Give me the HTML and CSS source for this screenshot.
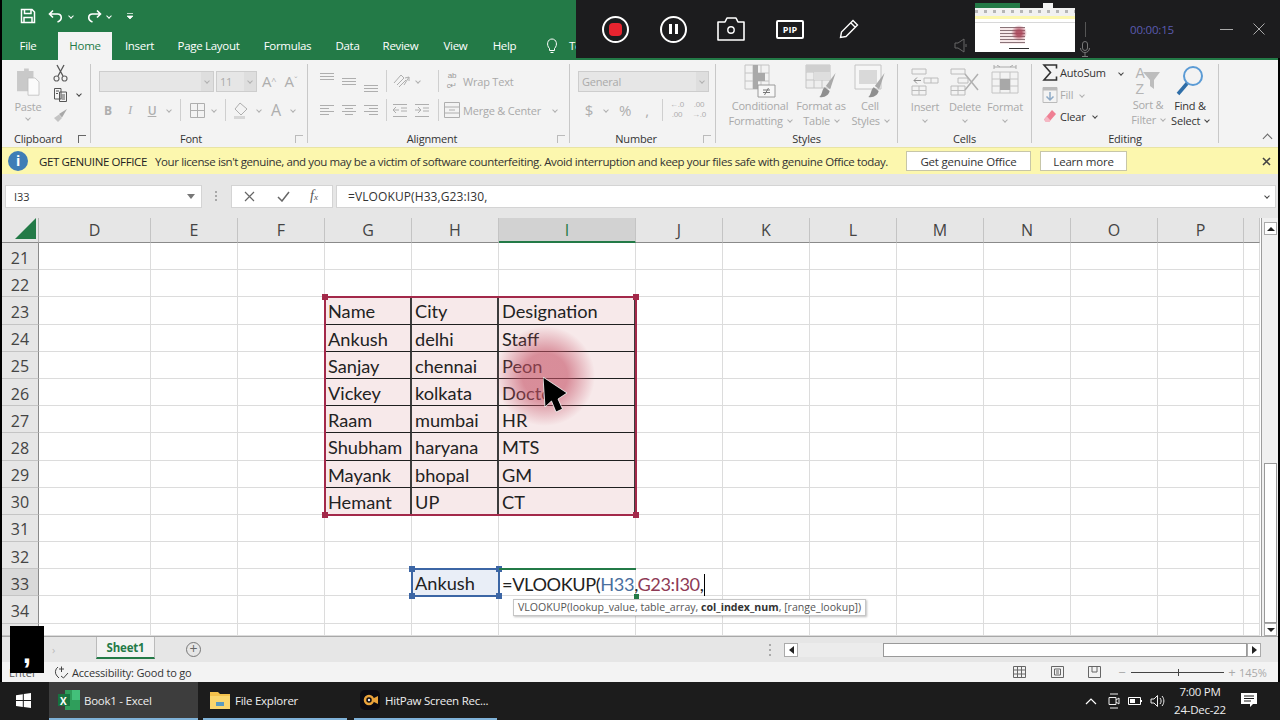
FILE: index.html
```html
<!DOCTYPE html>
<html lang="en">
<head>
    <meta charset="UTF-8">
    <title>Book1 - Excel</title>
    <link rel="stylesheet" href="styles.css">
</head>
<body>
    <svg class="sprites" width="0" height="0">
        <symbol id="al-left" viewBox="0 0 16 12"><path d="M1 1.5H15M1 4.5H10M1 7.5H15M1 10.5H10" fill="none" stroke="currentColor"/></symbol>
        <symbol id="al-center" viewBox="0 0 16 12"><path d="M1 1.5H15M4 4.5H12M1 7.5H15M4 10.5H12" fill="none" stroke="currentColor"/></symbol>
        <symbol id="al-right" viewBox="0 0 16 12"><path d="M1 1.5H15M6 4.5H15M1 7.5H15M6 10.5H15" fill="none" stroke="currentColor"/></symbol>
        <symbol id="al-bars" viewBox="0 0 16 8"><path d="M1 1.5H15M1 4.5H15M1 7.5H15" fill="none" stroke="currentColor"/></symbol>
        <symbol id="brush" viewBox="0 0 16 24"><path d="M15 1L6 13L10 16Z" fill="currentColor"/><path d="M5 14L9.500 17.500C9 21 5 24 0 23C3 21 2 16 5 14Z" fill="#8f8f8f"/></symbol>
    </svg>

    <div class="window">
        <header class="titlebar">
            <div class="qat">
                <svg class="qat-save" width="16" height="16" viewBox="0 0 16 16"><path d="M1.500 1.500H12L14.500 4V14.500H1.500Z M4.500 1.500V5.500H11V1.500 M4 14.500V9.500H12V14.500" fill="none" stroke="#fff" stroke-width="1.500"/></svg>
                <svg class="qat-arrow" width="16" height="14" viewBox="0 0 16 14"><path d="M5 1.500L1.500 5L5 8.500M2 5H9.500C14 5 15 11 9.500 13" fill="none" stroke="#fff" stroke-width="1.600"/></svg>
                <span class="caret caret-w"></span>
                <svg class="qat-arrow" width="16" height="14" viewBox="0 0 16 14"><path d="M11 1.500L14.500 5L11 8.500M14 5H6.500C2 5 1 11 6.500 13" fill="none" stroke="#fff" stroke-width="1.600"/></svg>
                <span class="caret caret-w"></span>
                <svg class="qat-more" width="8" height="8" viewBox="0 0 8 8"><path d="M1 1.500H7M1 4L4 7L7 4Z" fill="#fff" stroke="#fff" stroke-width=".7"/></svg>
            </div>
            <nav class="tabs">
                <span class="tab tab-file">File</span>
                <span class="tab tab-home">Home</span>
                <span class="tab tab-insert">Insert</span>
                <span class="tab tab-layout">Page Layout</span>
                <span class="tab tab-formulas">Formulas</span>
                <span class="tab tab-data">Data</span>
                <span class="tab tab-review">Review</span>
                <span class="tab tab-view">View</span>
                <span class="tab tab-help">Help</span>
                <svg class="bulb" width="12" height="16" viewBox="0 0 12 16"><path d="M3.500 10.500C0 7 1.500 1 6 1S12 7 8.500 10.500V12.500H3.500ZM4.500 14.500H7.500" fill="none" stroke="#fff"/></svg>
                <span class="tab tab-tell">Te</span>
            </nav>
        </header>

        <section class="ribbon">
            <div class="group g-clipboard">
                <div class="group-body">
                    <div class="big paste">
                        <svg width="26" height="29" viewBox="0 0 30 37"><path d="M1 5H10V2H16V5H22V31H1Z" fill="#c9c9c9"/><path d="M15 14H24L29 19V36H15Z" fill="#fbfbfb" stroke="#bdbdbd"/></svg>
                        <span class="big-label">Paste</span>
                        <span class="caret"></span>
                    </div>
                    <div class="clip-tools">
                        <svg width="15" height="18" viewBox="0 0 15 18"><path d="M4 1L10 12M11 1L5 12" fill="none" stroke="#555" stroke-width="1.300"/><circle cx="3.500" cy="14.500" r="2.500" fill="none" stroke="#666" stroke-width="1.200"/><circle cx="11.500" cy="14.500" r="2.500" fill="none" stroke="#666" stroke-width="1.200"/></svg>
                        <div class="copy-row">
                            <svg width="15" height="16" viewBox="0 0 15 16"><path d="M1.500 1.500H8V12H1.500ZM6.500 5H13.500V14.500H6.500Z M3 4H6M3 6.500H5M8.500 8H12M8.500 10H12M8.500 12H12" fill="#f3f3f3" stroke="#555"/></svg>
                            <span class="caret caret-d"></span>
                        </div>
                        <svg width="15" height="15" viewBox="0 0 15 15"><path d="M14 1L6 6L9 9.500Z" fill="#a8a8a8"/><path d="M1 10L6 6.500L9 10L5 14Z" fill="#c4c4c4"/></svg>
                    </div>
                </div>
                <div class="group-label">Clipboard</div>
                <span class="launcher launcher-d"></span>
            </div>

            <div class="group g-font">
                <div class="group-body rows">
                    <div class="row">
                        <div class="combo combo-font"><span class="combo-arrow"><span class="caret"></span></span></div>
                        <div class="combo combo-size"><span class="combo-text">11</span><span class="combo-arrow"><span class="caret"></span></span></div>
                        <span class="ic font-a up">A<sup>^</sup></span>
                        <span class="ic font-a">A<sup>ˇ</sup></span>
                    </div>
                    <div class="row">
                        <span class="ic btn-b">B</span>
                        <span class="ic btn-i">I</span>
                        <span class="ic btn-u">U</span>
                        <span class="car"><span class="caret"></span></span>
                        <span class="vsep mx5"></span>
                        <span class="ic"><svg width="15" height="15" viewBox="0 0 15 15"><path d="M.5.500H14.500V14.500H.5ZM7.500.5V14.500M.5 7.500H14.500" fill="none" stroke="currentColor"/></svg></span>
                        <span class="car"><span class="caret"></span></span>
                        <span class="vsep mx5"></span>
                        <span class="ic"><svg width="18" height="18" viewBox="0 0 18 18"><path d="M7 2L14 8L8 14L2 8Z" fill="none" stroke="currentColor"/><path d="M1 15H12V18H1Z" fill="#d6d6d6"/></svg></span>
                        <span class="car"><span class="caret"></span></span>
                        <span class="ic btn-a">A</span>
                        <span class="car"><span class="caret"></span></span>
                    </div>
                </div>
                <div class="group-label">Font</div>
                <span class="launcher"></span>
            </div>

            <div class="group g-align">
                <div class="group-body rows">
                    <div class="row">
                        <span class="ic valign-top"><svg width="16" height="8"><use href="#al-bars"/></svg></span>
                        <span class="ic valign-mid"><svg width="16" height="8"><use href="#al-bars"/></svg></span>
                        <span class="ic valign-bot"><svg width="16" height="8"><use href="#al-bars"/></svg></span>
                        <span class="vsep sep-a"></span>
                        <span class="ic"><svg width="17" height="17" viewBox="0 0 17 17"><path d="M1 10L8 2L11 5M4 12L11 5M6 14L13 7M11 12L16 4M16 4L12 5M16 4L16 8" fill="none" stroke="currentColor"/></svg></span>
                        <span class="car"><span class="caret"></span></span>
                        <span class="vsep sep-b"></span>
                        <span class="ic wrap-ic">ab<br>c↵</span>
                        <span class="small-label">Wrap Text</span>
                    </div>
                    <div class="row">
                        <span class="ic"><svg width="16" height="12"><use href="#al-left"/></svg></span>
                        <span class="ic"><svg width="16" height="12"><use href="#al-center"/></svg></span>
                        <span class="ic"><svg width="16" height="12"><use href="#al-right"/></svg></span>
                        <span class="vsep sep-c"></span>
                        <span class="ic"><svg width="16" height="13" viewBox="0 0 16 13"><path d="M1 .5H15M9 4H15M9 7H15M1 12.500H15M7 6H1M4 3L1 6L4 9" fill="none" stroke="currentColor"/></svg></span>
                        <span class="ic"><svg width="16" height="13" viewBox="0 0 16 13"><path d="M1 .5H15M9 4H15M9 7H15M1 12.500H15M1 6H7M4 3L7 6L4 9" fill="none" stroke="currentColor"/></svg></span>
                        <span class="vsep sep-d"></span>
                        <span class="ic"><svg width="16" height="16" viewBox="0 0 16 16"><path d="M.5.500H15.500V15.500H.5ZM.5 5H15.500M.5 11H15.500M5 8H11" fill="none" stroke="currentColor"/></svg></span>
                        <span class="small-label">Merge &amp; Center</span>
                        <span class="car car-merge"><span class="caret"></span></span>
                    </div>
                </div>
                <div class="group-label">Alignment</div>
                <span class="launcher"></span>
            </div>

            <div class="group g-number">
                <div class="group-body rows">
                    <div class="row">
                        <div class="combo combo-num"><span class="combo-text">General</span><span class="combo-arrow"><span class="caret"></span></span></div>
                    </div>
                    <div class="row">
                        <span class="ic num-ic">$</span>
                        <span class="car"><span class="caret"></span></span>
                        <span class="ic num-ic pct">%</span>
                        <span class="ic num-ic">,</span>
                        <span class="vsep sep-n"></span>
                        <span class="ic dec-ic">←.0<br>.00</span>
                        <span class="ic dec-ic">.00<br>→.0</span>
                    </div>
                </div>
                <div class="group-label">Number</div>
                <span class="launcher"></span>
            </div>

            <div class="group g-styles">
                <div class="group-body">
                    <div class="big w-cond">
                        <div class="big-ic">
                            <svg width="32" height="34" viewBox="0 0 32 34"><path d="M1 1H25V25H1ZM1 9H25M1 17H25M9 1V25M17 1V25" fill="#f3f3f3" stroke="#c4c4c4"/><path d="M9 1H14V9H21V17H14V25H9Z" fill="#a9a9a9"/><path d="M14 21H31V33H14Z" fill="#f7f7f7" stroke="#9a9a9a"/><path d="M19 26H26M19 28.500H26M24.500 24L20.500 31" fill="none" stroke="#777"/></svg>
                        </div>
                        <span class="big-label">Conditional</span>
                        <span class="big-label">Formatting <span class="caret"></span></span>
                    </div>
                    <div class="big w-tbl">
                        <div class="big-ic">
                            <svg width="32" height="34" viewBox="0 0 32 34"><path d="M1 1H25V24H1ZM1 8H25M1 16H25M9 1V24M17 1V24" fill="#eee" stroke="#c4c4c4"/><path d="M1 1H25V8H1Z" fill="#cfcfcf"/><path d="M9 8H25V16H9Z" fill="#dedede"/><svg x="14" y="8" width="18" height="26"><use href="#brush"/></svg></svg>
                        </div>
                        <span class="big-label">Format as</span>
                        <span class="big-label">Table <span class="caret"></span></span>
                    </div>
                    <div class="big w-cell">
                        <div class="big-ic">
                            <svg width="32" height="34" viewBox="0 0 32 34"><path d="M1 1H27V25H1Z" fill="#f6f6f6" stroke="#c4c4c4"/><path d="M5 6H23V20H5Z" fill="#d9d9d9"/><svg x="14" y="8" width="18" height="26"><use href="#brush"/></svg></svg>
                        </div>
                        <span class="big-label">Cell</span>
                        <span class="big-label">Styles <span class="caret"></span></span>
                    </div>
                </div>
                <div class="group-label">Styles</div>
            </div>

            <div class="group g-cells">
                <div class="group-body">
                    <div class="big w-40">
                        <div class="big-ic">
                            <svg width="28" height="28" viewBox="0 0 28 28"><path d="M1 1H15V6H1ZM1 18H15V27H1ZM8 18V27M1 22.500H15M13 10H27V15H13ZM20 10V15" fill="none" stroke="#bcbcbc"/><path d="M10 12.500H3M6 9.500L3 12.500L6 15.500" fill="none" stroke="#8f8f8f"/></svg>
                        </div>
                        <span class="big-label">Insert</span>
                        <span class="caret"></span>
                    </div>
                    <div class="big w-40">
                        <div class="big-ic">
                            <svg width="30" height="28" viewBox="0 0 30 28"><path d="M1 1H15V6H1ZM1 18H15V27H1ZM8 18V27M1 22.500H15M8 10H18V15H8Z" fill="none" stroke="#bcbcbc"/><path d="M15 6L28 22M28 6L15 22" fill="none" stroke="#b0b0b0" stroke-width="1.500"/></svg>
                        </div>
                        <span class="big-label">Delete</span>
                        <span class="caret"></span>
                    </div>
                    <div class="big w-40">
                        <div class="big-ic">
                            <svg width="28" height="34" viewBox="0 0 28 34"><path d="M3 2H25M3 0V4M25 0V4M9 2L6 0M19 2L22 0" fill="none" stroke="#aaa"/><path d="M1 7H27V28H1ZM9 7V28M19 7V28M1 14H27M1 21H27" fill="none" stroke="#c4c4c4"/><path d="M9 14H19V25H9Z" fill="#a8a8a8"/></svg>
                        </div>
                        <span class="big-label">Format</span>
                        <span class="caret"></span>
                    </div>
                </div>
                <div class="group-label">Cells</div>
            </div>

            <div class="group g-edit">
                <div class="group-body">
                    <div class="edit-col">
                        <div class="edit-row row-sum">
                            <svg width="15" height="17" viewBox="0 0 15 17"><path d="M14 4.500V1H1.500L8 8.500L1.500 16H14V12.500" fill="none" stroke="#333" stroke-width="1.600"/></svg>
                            <span class="edit-label on">AutoSum</span>
                            <span class="caret caret-d car-sum"></span>
                        </div>
                        <div class="edit-row row-fill">
                            <svg width="15" height="16" viewBox="0 0 15 16"><path d="M.5.500H14.500V15.500H.5Z" fill="#f3f3f3" stroke="#bbb"/><path d="M.5.500H14.500V3.500H.5Z" fill="#bbb"/><path d="M7.500 5V13M4 9.500L7.500 13L11 9.500" fill="none" stroke="#8eaac6" stroke-width="1.500"/></svg>
                            <span class="edit-label">Fill</span>
                            <span class="caret"></span>
                        </div>
                        <div class="edit-row row-clear">
                            <svg width="14" height="15" viewBox="0 0 14 15"><path d="M9 1L13 5L6 13H3L1 10.500Z" fill="#ef7f93"/><path d="M1 10.500L3 13H6L7.500 11.500L4 7.500Z" fill="#f5b8c4"/></svg>
                            <span class="edit-label on">Clear</span>
                            <span class="caret caret-d"></span>
                        </div>
                    </div>
                    <div class="big w-sort">
                        <div class="big-ic sort-ic">
                            <span class="sort-az">A<br>Z</span>
                            <svg width="18" height="19" viewBox="0 0 18 19"><path d="M0 1H17L11 9V18L7 15V9Z" fill="#bdbdbd"/></svg>
                        </div>
                        <span class="big-label">Sort &amp;</span>
                        <span class="big-label">Filter <span class="caret"></span></span>
                    </div>
                    <div class="big w-find">
                        <div class="big-ic">
                            <svg width="28" height="34" viewBox="0 0 28 34"><circle cx="17" cy="12" r="9" fill="none" stroke="#5b9bd5" stroke-width="2"/><path d="M11 19.500L2 30" fill="none" stroke="#2f6ea8" stroke-width="3.500"/></svg>
                        </div>
                        <span class="big-label on">Find &amp;</span>
                        <span class="big-label on">Select <span class="caret caret-d"></span></span>
                    </div>
                </div>
                <div class="group-label">Editing</div>
            </div>
            <div class="ribbon-end"><span class="collapse"></span></div>
        </section>

        <section class="notice">
            <span class="info">i</span>
            <strong>GET GENUINE OFFICE</strong>
            <span class="notice-msg">Your license isn't genuine, and you may be a victim of software counterfeiting. Avoid interruption and keep your files safe with genuine Office today.</span>
            <button class="notice-btn btn-get">Get genuine Office</button>
            <button class="notice-btn btn-learn">Learn more</button>
            <svg class="notice-x" width="9" height="9" viewBox="0 0 9 9"><path d="M1 1L8 8M8 1L1 8" stroke="#444" stroke-width="1.600"/></svg>
        </section>

        <section class="formula">
            <div class="namebox"><span>I33</span><span class="caret-solid"></span></div>
            <span class="grip"></span>
            <div class="fx-box">
                <svg width="11" height="11" viewBox="0 0 11 11"><path d="M1 1L10 10M10 1L1 10" stroke="#666" stroke-width="1.200"/></svg>
                <svg width="13" height="11" viewBox="0 0 13 11"><path d="M1 6L5 10L12 1" fill="none" stroke="#666" stroke-width="1.500"/></svg>
                <span class="fx">f<small>x</small></span>
            </div>
            <div class="fx-input"><span>=VLOOKUP(H33,G23:I30,</span><span class="caret caret-d"></span></div>
        </section>

        <section class="sheet">
            <div class="grid">
                <div class="corner"><span class="tri"></span></div>
                <div class="ch">D</div><div class="ch">E</div><div class="ch">F</div><div class="ch">G</div><div class="ch">H</div><div class="ch ch-sel">I</div><div class="ch">J</div><div class="ch">K</div><div class="ch">L</div><div class="ch">M</div><div class="ch">N</div><div class="ch">O</div><div class="ch">P</div><div class="ch"></div>

                <div class="rh">21</div><div class="c"></div><div class="c"></div><div class="c"></div><div class="c"></div><div class="c"></div><div class="c"></div><div class="c"></div><div class="c"></div><div class="c"></div><div class="c"></div><div class="c"></div><div class="c"></div><div class="c"></div><div class="c"></div>
                <div class="rh">22</div><div class="c"></div><div class="c"></div><div class="c"></div><div class="c"></div><div class="c"></div><div class="c"></div><div class="c"></div><div class="c"></div><div class="c"></div><div class="c"></div><div class="c"></div><div class="c"></div><div class="c"></div><div class="c"></div>
                <div class="rh">23</div><div class="c"></div><div class="c"></div><div class="c"></div><div class="c d">Name</div><div class="c d">City</div><div class="c d">Designation</div><div class="c"></div><div class="c"></div><div class="c"></div><div class="c"></div><div class="c"></div><div class="c"></div><div class="c"></div><div class="c"></div>
                <div class="rh">24</div><div class="c"></div><div class="c"></div><div class="c"></div><div class="c d">Ankush</div><div class="c d">delhi</div><div class="c d">Staff</div><div class="c"></div><div class="c"></div><div class="c"></div><div class="c"></div><div class="c"></div><div class="c"></div><div class="c"></div><div class="c"></div>
                <div class="rh">25</div><div class="c"></div><div class="c"></div><div class="c"></div><div class="c d">Sanjay</div><div class="c d">chennai</div><div class="c d">Peon</div><div class="c"></div><div class="c"></div><div class="c"></div><div class="c"></div><div class="c"></div><div class="c"></div><div class="c"></div><div class="c"></div>
                <div class="rh">26</div><div class="c"></div><div class="c"></div><div class="c"></div><div class="c d">Vickey</div><div class="c d">kolkata</div><div class="c d">Doctor</div><div class="c"></div><div class="c"></div><div class="c"></div><div class="c"></div><div class="c"></div><div class="c"></div><div class="c"></div><div class="c"></div>
                <div class="rh">27</div><div class="c"></div><div class="c"></div><div class="c"></div><div class="c d">Raam</div><div class="c d">mumbai</div><div class="c d">HR</div><div class="c"></div><div class="c"></div><div class="c"></div><div class="c"></div><div class="c"></div><div class="c"></div><div class="c"></div><div class="c"></div>
                <div class="rh">28</div><div class="c"></div><div class="c"></div><div class="c"></div><div class="c d">Shubham</div><div class="c d">haryana</div><div class="c d">MTS</div><div class="c"></div><div class="c"></div><div class="c"></div><div class="c"></div><div class="c"></div><div class="c"></div><div class="c"></div><div class="c"></div>
                <div class="rh">29</div><div class="c"></div><div class="c"></div><div class="c"></div><div class="c d">Mayank</div><div class="c d">bhopal</div><div class="c d">GM</div><div class="c"></div><div class="c"></div><div class="c"></div><div class="c"></div><div class="c"></div><div class="c"></div><div class="c"></div><div class="c"></div>
                <div class="rh">30</div><div class="c"></div><div class="c"></div><div class="c"></div><div class="c d">Hemant</div><div class="c d">UP</div><div class="c d">CT</div><div class="c"></div><div class="c"></div><div class="c"></div><div class="c"></div><div class="c"></div><div class="c"></div><div class="c"></div><div class="c"></div>
                <div class="rh">31</div><div class="c"></div><div class="c"></div><div class="c"></div><div class="c"></div><div class="c"></div><div class="c"></div><div class="c"></div><div class="c"></div><div class="c"></div><div class="c"></div><div class="c"></div><div class="c"></div><div class="c"></div><div class="c"></div>
                <div class="rh">32</div><div class="c"></div><div class="c"></div><div class="c"></div><div class="c"></div><div class="c"></div><div class="c"></div><div class="c"></div><div class="c"></div><div class="c"></div><div class="c"></div><div class="c"></div><div class="c"></div><div class="c"></div><div class="c"></div>
                <div class="rh rh-sel">33</div><div class="c"></div><div class="c"></div><div class="c"></div><div class="c"></div><div class="c lookup">Ankush</div><div class="c"></div><div class="c"></div><div class="c"></div><div class="c"></div><div class="c"></div><div class="c"></div><div class="c"></div><div class="c"></div><div class="c"></div>
                <div class="rh">34</div><div class="c"></div><div class="c"></div><div class="c"></div><div class="c"></div><div class="c"></div><div class="c"></div><div class="c"></div><div class="c"></div><div class="c"></div><div class="c"></div><div class="c"></div><div class="c"></div><div class="c"></div><div class="c"></div>
                <div class="rh"></div><div class="c"></div><div class="c"></div><div class="c"></div><div class="c"></div><div class="c"></div><div class="c"></div><div class="c"></div><div class="c"></div><div class="c"></div><div class="c"></div><div class="c"></div><div class="c"></div><div class="c"></div><div class="c"></div>

                <div class="range range-red">
                    <span class="hnd tl"></span><span class="hnd tr"></span><span class="hnd bl"></span><span class="hnd br"></span>
                </div>
                <div class="range range-blue">
                    <span class="hnd tl"></span><span class="hnd tr"></span><span class="hnd bl"></span><span class="hnd br"></span>
                </div>
                <div class="editor">=VLOOKUP(<span class="ref-blue">H33</span>,<span class="ref-red">G23:I30</span>,<span class="text-caret"></span><span class="hnd-green"></span></div>
            </div>
            <div class="vscroll">
                <span class="sb-btn"><span class="tri-up"></span></span>
                <span class="sb-track"></span>
                <span class="sb-thumb"></span>
                <span class="sb-btn"><span class="tri-down"></span></span>
            </div>
        </section>

        <section class="tabbar">
            <span class="nav-hint">›</span>
            <span class="sheet-tab">Sheet1</span>
            <span class="add-sheet">+</span>
            <span class="split"></span>
            <span class="hs-btn"><span class="tri-left"></span></span>
            <span class="hs-track"></span>
            <span class="hs-thumb"></span>
            <span class="hs-btn"><span class="tri-right"></span></span>
        </section>

        <footer class="status">
            <span class="st-mode">Enter</span>
            <svg class="st-acc" width="15" height="15" viewBox="0 0 15 15"><path d="M4 2A6 6 0 0 0 3 11L5 13M7.500 1.500V7M5 4H10M9.500 13L14 8M7 11L9.500 13" fill="none" stroke="#444"/></svg>
            <span class="st-text">Accessibility: Good to go</span>
            <svg class="view v1" width="13" height="12" viewBox="0 0 13 12"><path d="M.5.500H12.500V11.500H.5ZM.5 4H12.500M.5 8H12.500M4.500.5V11.500M8.500.5V11.500" fill="none" stroke="#666"/></svg>
            <svg class="view v2" width="13" height="12" viewBox="0 0 13 12"><path d="M.5.500H12.500V11.500H.5ZM3.500 3H9.500V9H3.500ZM5 5H8M5 7H8" fill="none" stroke="#666"/></svg>
            <svg class="view v3" width="13" height="12" viewBox="0 0 13 12"><path d="M.5.500H12.500V11.500H.5ZM4 .5V6H9V.5" fill="none" stroke="#666"/></svg>
            <span class="zoom-sign">−</span>
            <span class="slider"><span class="slider-tick"></span></span>
            <span class="zoom-sign">+</span>
            <span class="zoom-val">145%</span>
        </footer>
    </div>

    <footer class="taskbar">
        <svg class="start" width="15" height="15" viewBox="0 0 15 15"><path d="M0 2.200L6.800 1.200V7.100H0ZM7.800 1L15 0V7.100H7.800ZM0 8H6.800V13.900L0 12.900ZM7.800 8H15V15L7.800 14Z" fill="#fff"/></svg>
        <div class="task task-active">
            <svg width="22" height="20" viewBox="0 0 22 20"><path d="M7 0H22V20H7Z" fill="#2f9e5b"/><path d="M14 0H22V10H14Z" fill="#43c07a"/><path d="M0 4H12V16H0Z" fill="#17733f"/></svg>
            <b class="xl">X</b>
            <span>Book1 - Excel</span>
        </div>
        <div class="task task-2">
            <svg width="20" height="18" viewBox="0 0 20 18"><path d="M0 1H8L10 3H20V18H0Z" fill="#f3c14b"/><path d="M0 5H20V18H0Z" fill="#fad66d"/><path d="M6 11H14V15H6Z" fill="#5b9bc0"/></svg>
            <span>File Explorer</span>
        </div>
        <div class="task task-3">
            <svg width="20" height="20" viewBox="0 0 20 20"><rect width="20" height="20" rx="5" fill="#0c0a12"/><circle cx="9" cy="10" r="4" fill="none" stroke="#e9a13a" stroke-width="2.500"/><circle cx="9" cy="10" r="1.200" fill="#e8e8f0"/><path d="M14 8L18 6V14L14 12Z" fill="#e9a13a"/></svg>
            <span>HitPaw Screen Rec...</span>
        </div>
        <div class="tray">
            <svg class="tray-up" width="12" height="7" viewBox="0 0 12 7"><path d="M1 6L6 1L11 6" fill="none" stroke="#fff" stroke-width="1.200"/></svg>
            <svg width="12" height="16" viewBox="0 0 12 16"><path d="M2 1H10M2 15H10M1 4.500H8V11.500H1ZM8 7L11 5V11L8 9" fill="none" stroke="#eee"/></svg>
            <svg width="14" height="8" viewBox="0 0 14 8"><path d="M.5.500H12.500V7.500H.5Z" fill="none" stroke="#fff"/><path d="M2 2H7V6H2Z" fill="#fff"/><path d="M13 3H14V5H13Z" fill="#fff"/></svg>
            <svg width="15" height="14" viewBox="0 0 15 14"><path d="M1 5H4L7.500 1.500V12.500L4 9H1ZM10 4C11.500 6 11.500 8 10 10M12 2C14.500 5 14.500 9 12 12" fill="none" stroke="#eee"/></svg>
            <div class="clock"><span>7:00 PM</span><span>24-Dec-22</span></div>
            <svg class="notif" width="16" height="16" viewBox="0 0 16 16"><path d="M0 0H16V11H12L9 14V11H0Z" fill="#fff"/><path d="M3 3H13M3 5.500H13M3 8H10" stroke="#1b1b1b"/></svg>
        </div>
    </footer>

    <!-- screen recorder, sits on top of the excel title bar -->
    <div class="recorder">
        <span class="rec-btn rec-stop"><span class="rec-dot"></span></span>
        <span class="rec-btn rec-pause"><span class="bar"></span><span class="bar"></span></span>
        <svg class="rec-cam" width="30" height="26" viewBox="0 0 30 26"><path d="M2 6H9L11 2H20L22 6H28V24H2Z" fill="none" stroke="#fff" stroke-width="1.600" stroke-linejoin="round"/><circle cx="15" cy="14" r="3.200" fill="none" stroke="#fff" stroke-width="1.400"/></svg>
        <span class="rec-pip">PIP</span>
        <svg class="rec-pen" width="20" height="20" viewBox="0 0 20 20"><path d="M14 1.500L18.500 6L7 17.500L1.500 18.500L2.500 13ZM12 4L16 8" fill="none" stroke="#fff" stroke-width="1.400"/></svg>
        <svg class="rec-spk" width="14" height="15" viewBox="0 0 14 15"><path d="M1 5H4L10 1V14L4 10H1Z M12 6V9" fill="none" stroke="#666"/></svg>
        <div class="thumb">
            <div class="th-top"><span class="th-green"></span><span class="th-dark"></span><span class="th-white"></span><span class="th-dark"></span></div>
            <div class="th-ribbon"></div>
            <div class="th-yellow"></div>
            <div class="th-body"><span class="th-table"></span><span class="th-spot"></span><span class="th-line"></span></div>
            <div class="th-bottom"></div>
        </div>
        <div class="rec-mic">
            <span class="mic-sep"></span>
            <svg width="10" height="16" viewBox="0 0 10 16"><rect x="2.500" y=".5" width="5" height="9" rx="2.500" fill="none" stroke="#777"/><path d="M.5 7C.5 13 9.500 13 9.500 7M5 12V15.500M2 15.500H8" fill="none" stroke="#777"/></svg>
        </div>
        <span class="rec-time">00:00:15</span>
        <span class="rec-min"></span>
        <svg class="rec-close" width="12" height="12" viewBox="0 0 12 12"><path d="M.5.500L11.500 11.500M11.500.5L.5 11.500" stroke="#aaa"/></svg>
    </div>

    <div class="tooltip">VLOOKUP(lookup_value, table_array, <b>col_index_num</b>, [range_lookup])</div>

    <div class="spot"></div>
    <svg class="pointer" width="26" height="36" viewBox="0 0 26 36"><path d="M0 0L2 30L8.500 24L13 35L19.500 32L15 22L24 16Z" fill="#000" stroke="#fff" stroke-width=".8"/></svg>

    <div class="keycap">,</div>
</body>
</html>
```

FILE: styles.css
```css
* {
    box-sizing: border-box;
}

body {
    margin: 0;
    width: 1280px;
    height: 720px;
    overflow: hidden;
    position: relative;
    background-color: #000;
    font-family: "Open Sans", "Liberation Sans", sans-serif;
    font-size: 11px;
    color: #333;
}

.sprites {
    position: absolute;
}

.window {
    margin: 0 2px;
    height: 682px;
    display: flex;
    flex-direction: column;
    background-color: #f3f3f3;
}

/* small chevrons used everywhere */
.caret {
    display: inline-block;
    width: 4px;
    height: 4px;
    border-right: 1px solid #b0b0b0;
    border-bottom: 1px solid #b0b0b0;
    transform: rotate(45deg);
    vertical-align: 2px;
}

.caret-w {
    border-color: #fff;
}

.caret-d {
    border-color: #444;
}

/* title bar */
.titlebar {
    height: 60px;
    background-color: #237a47;
    color: #fff;
}

.qat {
    height: 32px;
    display: flex;
    align-items: center;
    padding-left: 18px;
}

.qat-save {
    margin-right: 12px;
}

.qat .caret {
    margin: 0 13px 0 5px;
}

.qat-more {
    margin-left: 2px;
}

.tabs {
    height: 28px;
    display: flex;
    align-items: center;
    font-size: 11.500px;
    letter-spacing: -.3px;
}

.tab {
    display: block;
    text-align: center;
    line-height: 28px;
}

.tab-file { width: 56px; padding-right: 4px; }
.tab-home { width: 54px; background-color: #f3f3f3; color: #237a47; }
.tab-insert { width: 55px; }
.tab-layout { width: 83px; }
.tab-formulas { width: 75px; }
.tab-data { width: 45px; }
.tab-review { width: 61px; }
.tab-view { width: 49px; }
.tab-help { width: 49px; }
.bulb { margin-left: 17px; }
.tab-tell { margin-left: 11px; }

/* ribbon */
.ribbon {
    height: 87px;
    display: flex;
    background-color: #f3f3f3;
    font-size: 11px;
    color: #a9a9a9;
    letter-spacing: -.2px;
}

.group {
    position: relative;
    margin: 4px 0;
    display: flex;
    flex-direction: column;
    border-right: 1px solid #c8c8c8;
}

.group-body {
    height: 63px;
    display: flex;
}

.group-label {
    height: 11px;
    margin-top: 5px;
    text-align: center;
    line-height: 14px;
    color: #333;
}

.launcher {
    position: absolute;
    right: 4px;
    bottom: 0;
    width: 8px;
    height: 8px;
    border-left: 1px solid #bbb;
    border-top: 1px solid #bbb;
}

.launcher-d {
    border-color: #666;
}

.g-clipboard { width: 89px; }
.g-font { width: 217px; }
.g-align { width: 262px; }
.g-number { width: 146px; }
.g-styles { width: 182px; }
.g-cells { width: 134px; }
.g-edit { width: 187px; }

.g-clipboard .group-label { width: 72px; }
.g-font .group-label { width: 200px; }
.g-align .group-label { width: 248px; }
.g-number .group-label { width: 132px; }

.ribbon-end {
    flex: 1;
    position: relative;
}

.collapse {
    position: absolute;
    right: 7px;
    bottom: 5px;
    width: 7px;
    height: 7px;
    border-left: 1px solid #666;
    border-top: 1px solid #666;
    transform: rotate(45deg);
}

.rows {
    flex-direction: column;
}

.row {
    display: flex;
    align-items: center;
}

.big {
    display: flex;
    flex-direction: column;
    align-items: center;
    font-size: 11px;
}

.big-ic {
    height: 35px;
    display: flex;
    align-items: center;
    justify-content: center;
}

.big-label {
    height: 15px;
    line-height: 15px;
    white-space: nowrap;
}

.big .caret {
    margin-top: 4px;
    vertical-align: 3px;
}

.big-label .caret {
    margin: 0 0 0 2px;
}

.on {
    color: #333;
}

.paste {
    width: 44px;
    margin-left: 4px;
}

.paste svg {
    display: block;
    margin: 3px 0;
}

.paste .caret {
    margin-top: 2px;
}

.clip-tools {
    width: 36px;
    display: flex;
    flex-direction: column;
    gap: 5px;
    padding: 0 0 0 3px;
}

.copy-row {
    display: flex;
    align-items: center;
    gap: 9px;
}

.copy-row .caret {
    margin-bottom: 3px;
}

.ic {
    width: 22px;
    height: 24px;
    display: flex;
    align-items: center;
    justify-content: center;
    color: #aeaeae;
    flex-shrink: 0;
}

.car {
    width: 12px;
    display: flex;
    justify-content: center;
    flex-shrink: 0;
}

.vsep {
    width: 1px;
    height: 22px;
    background-color: #cfcfcf;
    flex-shrink: 0;
}

.mx5 { margin: 0 5px; }

.g-font .rows { padding-left: 6px; }
.g-font .row:first-child { padding-left: 2px; height: 34px; }

.combo {
    height: 21px;
    display: flex;
    align-items: center;
    justify-content: space-between;
    background-color: #e6e6e6;
    border: 1px solid #cdcdcd;
    color: #aaa;
}

.combo-font { width: 115px; justify-content: flex-end; }
.combo-size { width: 41px; margin-left: 2px; }
.combo-num { width: 131px; }

.combo-text {
    padding-left: 3px;
}

.combo-arrow {
    width: 12px;
    height: 19px;
    display: flex;
    align-items: center;
    justify-content: center;
    background-color: #dedede;
}

.font-a {
    font-size: 15px;
    width: 22px;
}

.font-a sup {
    font-size: 9px;
    line-height: 0;
}

.up { margin-left: 1px; }

.btn-b { font-weight: 700; font-size: 12px; }
.btn-i { font-style: italic; font-family: "Liberation Serif", serif; font-size: 13px; }
.btn-u { text-decoration: underline; font-weight: 600; font-size: 12px; }
.btn-a { font-size: 16px; }

.g-align .rows { padding-left: 8px; }
.g-align .row:first-child { height: 34px; }

.valign-top { align-items: flex-start; padding-top: 3px; }
.valign-bot { align-items: flex-end; padding-bottom: 1px; }

.sep-a { margin: 0 3px 0 4px; }
.sep-b { margin-left: 14px; margin-right: 2px; }
.sep-c { margin: 0 2px 0 4px; }
.sep-d { margin: 0 2px 0 5px; }

.wrap-ic,
.dec-ic {
    display: block;
    height: auto;
    font-family: "Liberation Sans", sans-serif;
    font-size: 8px;
    line-height: 10px;
    text-align: center;
}

.wrap-ic {
    color: #999;
}

.small-label {
    white-space: nowrap;
    font-size: 11px;
}

.car-merge { margin-left: 8px; }

.g-number .rows { padding-left: 8px; }
.g-number .row:first-child { height: 34px; }

.num-ic { font-size: 15px; }
.pct { margin-left: 2px; }
.sep-n { margin: 0 3px 0 4px; }

.g-styles .group-body { padding-left: 12px; }
.w-cond { width: 64px; }
.w-tbl { width: 58px; }
.w-cell { width: 40px; }

.g-cells .group-body { padding-left: 7px; }
.w-40 { width: 40px; }

.g-edit .group-body { padding-left: 8px; }

.edit-col {
    width: 88px;
    display: flex;
    flex-direction: column;
    margin-top: -2px;
    padding: 0 0 0 2px;
}

.edit-row {
    height: 22px;
    display: flex;
    align-items: center;
    gap: 2px;
}

.edit-row svg {
    width: 16px;
    flex-shrink: 0;
}

.edit-row .caret {
    margin-left: 5px;
}

.edit-row .car-sum {
    margin-left: 11px;
}

.w-sort { width: 40px; }
.w-find { width: 44px; }

.sort-ic {
    gap: 0;
    color: #b5b5b5;
}

.sort-az {
    font-family: "Liberation Sans", sans-serif;
    font-size: 14px;
    line-height: 16px;
    margin-right: -2px;
}

/* licence notice */
.notice {
    height: 27px;
    display: flex;
    align-items: center;
    background-color: #fcf7ae;
    border-top: 1px solid #e8e4a4;
    font-size: 11.500px;
    letter-spacing: -.38px;
    color: #333;
}

.info {
    width: 20px;
    height: 20px;
    margin: 0 11px 0 6px;
    border-radius: 50%;
    background-color: #3f7db6;
    color: #fff;
    text-align: center;
    line-height: 20px;
    font-size: 14px;
    font-weight: 700;
}

.notice strong {
    font-weight: 400;
    color: #222;
    width: 116px;
    white-space: nowrap;
}

.notice-msg {
    width: 751px;
    white-space: nowrap;
}

.notice-btn {
    height: 20px;
    padding: 0;
    background-color: #fff;
    border: 1px solid #c7c6a8;
    font: inherit;
    letter-spacing: -.2px;
    color: #333;
}

.btn-get { width: 125px; }
.btn-learn { width: 87px; margin-left: 9px; }

.notice-x {
    margin-left: 135px;
}

/* formula bar */
.formula {
    height: 44px;
    display: flex;
    align-items: center;
    background-color: #e6e6e6;
    padding: 0 2px 0 3px;
}

.namebox {
    width: 197px;
    height: 23px;
    display: flex;
    align-items: center;
    justify-content: space-between;
    padding: 0 6px 0 8px;
    background-color: #fff;
    border: 1px solid #d4d4d4;
}

.caret-solid {
    border-top: 5px solid #777;
    border-left: 4px solid transparent;
    border-right: 4px solid transparent;
}

.grip {
    width: 2px;
    height: 11px;
    margin: 0 14px 0 13px;
    background-image: repeating-linear-gradient(#a8a8a8 0 2px, transparent 2px 4px);
}

.fx-box {
    width: 102px;
    height: 23px;
    display: flex;
    align-items: center;
    padding-left: 12px;
    gap: 22px;
    background-color: #fff;
    border: 1px solid #d4d4d4;
}

.fx {
    font-family: "Liberation Serif", serif;
    font-style: italic;
    font-size: 14px;
    color: #555;
    margin-left: -2px;
}

.fx small {
    font-size: 9px;
}

.fx-input {
    flex: 1;
    height: 23px;
    margin-left: 3px;
    display: flex;
    align-items: center;
    justify-content: space-between;
    padding: 0 6px 0 11px;
    background-color: #fff;
    border: 1px solid #d4d4d4;
    font-size: 12px;
    letter-spacing: .1px;
    color: #333;
}

/* sheet */
.sheet {
    height: 418px;
    display: flex;
    background-color: #e6e6e6;
}

.grid {
    position: relative;
    width: 1260px;
    display: grid;
    grid-template-columns: 37px 112px 87px 87px 87px 87px 137px 87px 87px 87px 87px 87px 87px 86px 16px;
    grid-template-rows: 25px repeat(14, 27.200px) 12.200px;
    background-color: #fff;
    border-right: 1px solid #9d9d9d;
    font-family: Lato, "Liberation Sans", sans-serif;
    font-size: 18.200px;
    color: #222;
}

.corner {
    background-color: #e6e6e6;
    border-right: 1px solid #b5b5b5;
    border-bottom: 1px solid #8a8a8a;
    position: relative;
}

.tri {
    position: absolute;
    right: 2px;
    bottom: 3px;
    border-bottom: 21px solid #237a47;
    border-left: 21px solid transparent;
}

.ch,
.rh {
    display: flex;
    align-items: center;
    justify-content: center;
    background-color: #e6e6e6;
    font-family: "Open Sans", sans-serif;
    font-size: 16px;
    color: #444;
}

.ch {
    border-right: 1px solid #c4c4c4;
    border-bottom: 1px solid #8a8a8a;
}

.ch-sel {
    background-color: #d2d2d2;
    border-bottom: 2px solid #237a47;
    color: #237a47;
}

.rh {
    padding-top: 3px;
    border-right: 1px solid #8a8a8a;
    border-bottom: 1px solid #c4c4c4;
}

.rh-sel {
    background-color: #d9d9d9;
}

.c {
    display: flex;
    align-items: center;
    padding: 2px 0 0 3px;
    white-space: nowrap;
    overflow: hidden;
    border-right: 1px solid #dcdcdc;
    border-bottom: 1px solid #dcdcdc;
}

.d {
    background-color: #f7e9ea;
    border-right: 2px solid #3c3c3c;
    border-bottom: 1.500px solid #1f1f1f;
}

.lookup {
    background-color: #e9eef7;
}

.range {
    position: absolute;
    inset: -1px;
    pointer-events: none;
}

.range-red {
    grid-column: 5 / 8;
    grid-row: 4 / 12;
    border: 2px solid #a3294a;
}

.range-blue {
    grid-column: 6 / 7;
    grid-row: 14 / 15;
    border: 2px solid #3c66a5;
}

.hnd {
    position: absolute;
    width: 6px;
    height: 6px;
    background-color: #a3294a;
}

.range-blue .hnd {
    background-color: #3c66a5;
}

.tl { left: -4px; top: -4px; }
.tr { right: -4px; top: -4px; }
.bl { left: -4px; bottom: -4px; }
.br { right: -4px; bottom: -4px; }

.editor {
    position: absolute;
    grid-column: 7 / 8;
    grid-row: 14 / 15;
    left: 0;
    top: -1px;
    right: 0;
    bottom: 0;
    padding-left: 3px;
    border-top: 2px solid #237a47;
    line-height: 28px;
    white-space: nowrap;
    color: #222;
    letter-spacing: -.4px;
}

.ref-blue {
    color: #4a6f9e;
}

.ref-red {
    color: #8e3a55;
}

.text-caret {
    display: inline-block;
    width: 1px;
    height: 22px;
    margin-left: 1px;
    vertical-align: -5px;
    background-color: #000;
}

.hnd-green {
    position: absolute;
    right: -3px;
    bottom: -3px;
    width: 5px;
    height: 5px;
    background-color: #237a47;
}

.vscroll {
    flex: 1;
    display: flex;
    flex-direction: column;
    padding: 4px 1px 0 2px;
    background-color: #f0f0f0;
}

.sb-btn,
.hs-btn {
    display: flex;
    align-items: center;
    justify-content: center;
    background-color: #fff;
    border: 1px solid #aaa;
    flex-shrink: 0;
}

.sb-btn {
    height: 13px;
}

.sb-track {
    flex: 1;
}

.sb-thumb {
    height: 160px;
    background-color: #fff;
    border: 1px solid #9a9a9a;
}

.tri-up { border-bottom: 4px solid #222; border-left: 4px solid transparent; border-right: 4px solid transparent; }
.tri-down { border-top: 4px solid #222; border-left: 4px solid transparent; border-right: 4px solid transparent; }
.tri-left { border-right: 5px solid #222; border-top: 4px solid transparent; border-bottom: 4px solid transparent; }
.tri-right { border-left: 5px solid #222; border-top: 4px solid transparent; border-bottom: 4px solid transparent; }

/* sheet tabs and horizontal scrollbar */
.tabbar {
    height: 26px;
    display: flex;
    align-items: center;
    background-color: #e6e6e6;
    border-top: 1px solid #a8a8a8;
}

.nav-hint {
    width: 94px;
    padding-left: 50px;
    color: #bbb;
}

.sheet-tab {
    width: 59px;
    height: 22px;
    margin-top: -4px;
    text-align: center;
    line-height: 22px;
    background-color: #f3f3f3;
    border-left: 1px solid #bbb;
    border-right: 1px solid #bbb;
    border-bottom: 2px solid #237a47;
    font-weight: 700;
    font-size: 11.500px;
    letter-spacing: -.2px;
    color: #237a47;
}

.add-sheet {
    width: 15px;
    height: 15px;
    margin-left: 31px;
    border: 1px solid #777;
    border-radius: 50%;
    text-align: center;
    line-height: 12px;
    font-size: 14px;
    color: #666;
}

.split {
    width: 2px;
    height: 12px;
    margin: 0 13px 0 568px;
    background-image: repeating-linear-gradient(#aaa 0 2px, transparent 2px 5px);
}

.hs-btn {
    width: 14px;
    height: 14px;
}

.hs-track {
    width: 85px;
    height: 14px;
    background-color: #ececec;
}

.hs-thumb {
    width: 364px;
    height: 14px;
    background-color: #fff;
    border: 1px solid #9a9a9a;
}

/* status bar */
.status {
    height: 20px;
    display: flex;
    align-items: center;
    background-color: #f3f3f3;
    font-size: 11px;
    color: #333;
}

.st-mode {
    width: 45px;
    padding-left: 7px;
    color: #555;
}

.st-acc {
    margin: 0 3px 0 7px;
}

.st-text {
    width: 948px;
    letter-spacing: -.18px;
    white-space: nowrap;
}

.v1 { margin-left: -7px; }
.v2 { margin-left: 25px; }
.v3 { margin-left: 24px; }

.zoom-sign {
    width: 10px;
    text-align: center;
    color: #aaa;
    font-size: 13px;
}

.v3 + .zoom-sign {
    margin-left: 16px;
}

.slider {
    position: relative;
    width: 93px;
    height: 1px;
    margin: 0 3px 0 4px;
    background-color: #444;
}

.slider-tick {
    position: absolute;
    left: 47px;
    top: -3px;
    width: 1px;
    height: 7px;
    background-color: #444;
}

.zoom-val {
    margin-left: 2px;
    color: #aaa;
}

/* windows taskbar */
.taskbar {
    height: 38px;
    display: flex;
    align-items: stretch;
    background-color: #1c1c1c;
    color: #eee;
    font-size: 11.500px;
    letter-spacing: -.25px;
}

.start {
    margin: 11px 18px 0 16px;
}

.task {
    position: relative;
    display: flex;
    align-items: center;
    gap: 5px;
    padding-left: 9px;
    border-bottom: 2px solid #7fb2d8;
    white-space: nowrap;
}

.task-active {
    width: 149px;
    background-color: #3d3d3d;
    gap: 4px;
}

.task-2 { width: 144px; margin-left: 5px; padding-left: 7px; }
.task-3 { width: 143px; margin-left: 7px; padding-left: 6px; }

.xl {
    position: absolute;
    left: 11px;
    top: 12px;
    font-size: 10px;
    color: #fff;
}

.tray {
    flex: 1;
    display: flex;
    align-items: center;
    justify-content: flex-end;
    padding-right: 23px;
    gap: 8px;
}

.tray-up {
    margin-right: 3px;
}

.clock {
    display: flex;
    flex-direction: column;
    align-items: center;
    width: 60px;
    margin: 0 3px 0 -3px;
    line-height: 18px;
    font-size: 11.500px;
    white-space: nowrap;
}

/* recorder bar */
.recorder {
    position: absolute;
    left: 576px;
    top: 0;
    width: 704px;
    height: 58px;
    display: flex;
    align-items: center;
    background-color: #1c1c1e;
    color: #fff;
}

.rec-btn {
    width: 27px;
    height: 27px;
    display: flex;
    align-items: center;
    justify-content: center;
    gap: 3px;
    border: 2px solid #fff;
    border-radius: 50%;
    flex-shrink: 0;
}

.rec-stop { margin-left: 26px; }
.rec-pause { margin-left: 31px; }

.rec-dot {
    width: 13px;
    height: 13px;
    border-radius: 4px;
    background-color: #e8242f;
}

.bar {
    width: 3px;
    height: 10px;
    background-color: #fff;
}

.rec-cam { margin-left: 29px; }

.rec-pip {
    width: 28px;
    height: 19px;
    margin-left: 30px;
    border: 2px solid #fff;
    border-radius: 2px;
    text-align: center;
    line-height: 15px;
    font-size: 9px;
    font-weight: 700;
}

.rec-pen { margin-left: 35px; }

.rec-spk {
    margin: 32px 0 0 95px;
}

.thumb {
    width: 100px;
    height: 52px;
    margin-left: 7px;
    display: flex;
    flex-direction: column;
    background-color: #fff;
}

.th-top {
    height: 5px;
    display: flex;
}

.th-green { width: 45px; background-color: #237a47; }
.th-dark { flex: 1; background-color: #1c1c1e; }
.th-white { width: 10px; background-color: #f3f3f3; }

.th-ribbon {
    height: 8px;
    background-color: #f1f1f1;
    background-image: repeating-linear-gradient(90deg, #b5b5b5 0 3px, transparent 3px 9px);
    background-size: 100% 3px;
    background-repeat: no-repeat;
    background-position: 0 2px;
}

.th-yellow {
    height: 3px;
    background-color: #fcf7ae;
}

.th-body {
    flex: 1;
    position: relative;
    background-image: linear-gradient(#d8d8d8, #d8d8d8);
    background-size: 100% 1px;
    background-repeat: no-repeat;
    background-position: 0 3px;
}

.th-table {
    position: absolute;
    left: 25px;
    top: 8px;
    width: 25px;
    height: 17px;
    background-color: #f7e9ea;
    background-image: repeating-linear-gradient(#8a7378 0 1px, transparent 1px 3px);
}

.th-spot {
    position: absolute;
    left: 36px;
    top: 6px;
    width: 16px;
    height: 16px;
    border-radius: 50%;
    background-image: radial-gradient(circle closest-side, rgba(170, 70, 90, .9) 0 35%, rgba(196, 70, 90, 0) 100%);
}

.th-line {
    position: absolute;
    left: 34px;
    top: 29px;
    width: 20px;
    height: 1px;
    background-color: #333;
}

.th-bottom {
    height: 3px;
    background-color: #1c1c1e;
}

.rec-mic {
    width: 10px;
    margin-left: 5px;
    display: flex;
    flex-direction: column;
    align-items: center;
    gap: 4px;
    padding-top: 20px;
}

.mic-sep {
    width: 1px;
    height: 15px;
    background-color: #555;
}

.rec-time {
    margin-left: 40px;
    width: 46px;
    font-size: 11.500px;
    letter-spacing: -.2px;
    color: #5b5bb0;
}

.rec-min {
    width: 13px;
    height: 1px;
    margin-left: 44px;
    background-color: #aaa;
}

.rec-close { margin-left: 20px; }

/* things floating over the sheet */
.tooltip {
    position: absolute;
    left: 513px;
    top: 599px;
    width: 353px;
    height: 17px;
    padding-left: 4px;
    background-color: #fff;
    border: 1px solid #c6c6c6;
    box-shadow: 1px 1px 2px rgba(0, 0, 0, .25);
    line-height: 15px;
    font-size: 10.600px;
    white-space: nowrap;
    color: #555;
}

.tooltip b {
    color: #333;
}

.spot {
    position: absolute;
    left: 495px;
    top: 326px;
    width: 100px;
    height: 100px;
    border-radius: 50%;
    background-image: radial-gradient(circle closest-side, rgba(196, 80, 100, .6) 0 45%, rgba(196, 80, 100, 0) 100%);
}

.pointer {
    position: absolute;
    left: 543px;
    top: 377px;
}

.keycap {
    position: absolute;
    left: 10px;
    top: 626px;
    width: 34px;
    height: 47px;
    padding-top: 10px;
    background-color: #000;
    color: #fff;
    text-align: center;
    font: 700 30px "Liberation Sans", sans-serif;
}
```
